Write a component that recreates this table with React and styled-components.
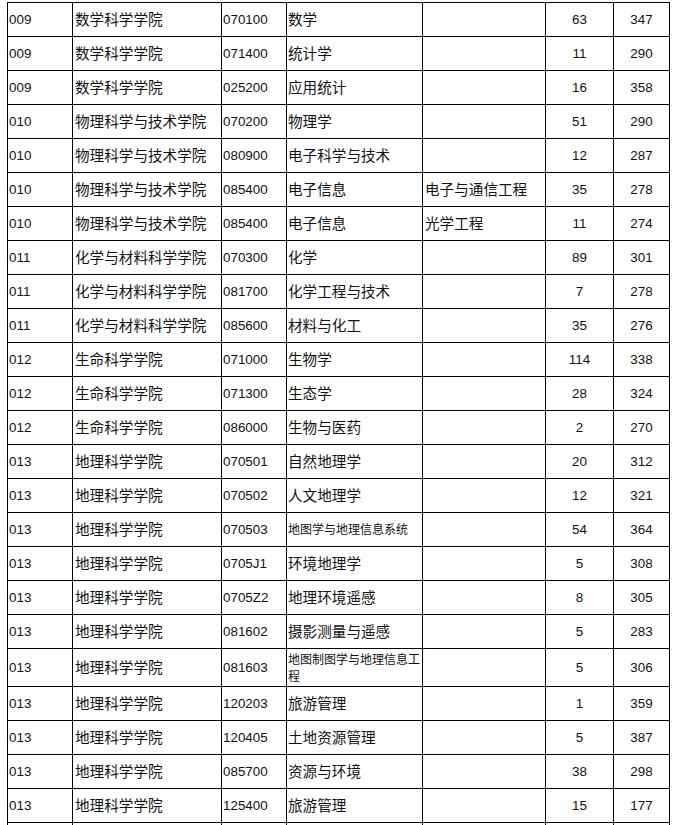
import React from "react";
import styled, { createGlobalStyle } from "styled-components";

const Global = createGlobalStyle`
  html, body { margin: 0; padding: 0; background: #fff; }
  body { overflow: hidden; }
`;

const Page = styled.div`
  width: 674px;
  height: 825px;
  overflow: hidden;
  padding: 2px 0 0 7px;
  box-sizing: border-box;
  font-family: "Liberation Sans", "Noto Sans CJK SC", sans-serif;
  color: #111;
`;

const Table = styled.div`
  width: 663px;
  display: flex;
  flex-direction: column;
  gap: 1px;
  padding-top: 1px;
  background: #000;
`;

const Row = styled.div`
  display: grid;
  grid-template-columns: 64px 148px 64px 135px 122px 67px 55px;
  column-gap: 1px;
  padding: 0 1px;
  background: #000;
  height: ${(p) => p.$h || 33}px;
`;

const Cell = styled.div`
  background: #fff;
  display: flex;
  align-items: center;
  justify-content: ${(p) => (p.$center ? "center" : "flex-start")};
  padding-left: ${(p) => (p.$center ? 0 : p.$pad ?? 2)}px;
  padding-bottom: ${(p) => (p.$num ? 0 : 2)}px;
  box-sizing: border-box;
  font-size: ${(p) => (p.$num ? "13.4px" : p.$small ? "12px" : "14.6px")};
  line-height: ${(p) => (p.$small ? "17px" : "18px")};
  font-family: ${(p) =>
    p.$num
      ? `"Liberation Sans", sans-serif`
      : `"Noto Sans CJK SC", sans-serif`};
  white-space: ${(p) => (p.$small ? "normal" : "nowrap")};
  word-break: break-all;
  overflow: hidden;
`;

const rows = [
  ["009", "数学科学学院", "070100", "数学", "", "63", "347"],
  ["009", "数学科学学院", "071400", "统计学", "", "11", "290"],
  ["009", "数学科学学院", "025200", "应用统计", "", "16", "358"],
  ["010", "物理科学与技术学院", "070200", "物理学", "", "51", "290"],
  ["010", "物理科学与技术学院", "080900", "电子科学与技术", "", "12", "287"],
  ["010", "物理科学与技术学院", "085400", "电子信息", "电子与通信工程", "35", "278"],
  ["010", "物理科学与技术学院", "085400", "电子信息", "光学工程", "11", "274"],
  ["011", "化学与材料科学学院", "070300", "化学", "", "89", "301"],
  ["011", "化学与材料科学学院", "081700", "化学工程与技术", "", "7", "278"],
  ["011", "化学与材料科学学院", "085600", "材料与化工", "", "35", "276"],
  ["012", "生命科学学院", "071000", "生物学", "", "114", "338"],
  ["012", "生命科学学院", "071300", "生态学", "", "28", "324"],
  ["012", "生命科学学院", "086000", "生物与医药", "", "2", "270"],
  ["013", "地理科学学院", "070501", "自然地理学", "", "20", "312"],
  ["013", "地理科学学院", "070502", "人文地理学", "", "12", "321"],
  ["013", "地理科学学院", "070503", "地图学与地理信息系统", "", "54", "364", "small"],
  ["013", "地理科学学院", "0705J1", "环境地理学", "", "5", "308"],
  ["013", "地理科学学院", "0705Z2", "地理环境遥感", "", "8", "305"],
  ["013", "地理科学学院", "081602", "摄影测量与遥感", "", "5", "283"],
  ["013", "地理科学学院", "081603", "地图制图学与地理信息工程", "", "5", "306", "tall"],
  ["013", "地理科学学院", "120203", "旅游管理", "", "1", "359"],
  ["013", "地理科学学院", "120405", "土地资源管理", "", "5", "387"],
  ["013", "地理科学学院", "085700", "资源与环境", "", "38", "298"],
  ["013", "地理科学学院", "125400", "旅游管理", "", "15", "177"],
  ["", "", "", "", "", "", ""],
];

export default function App() {
  return (
    <>
      <Global />
      <Page>
        <Table>
          {rows.map((r, i) => {
            const small = r[7] === "small" || r[7] === "tall";
            return (
              <Row key={i} $h={r[7] === "tall" ? 37 : 33}>
                <Cell $num $pad={1}>{r[0]}</Cell>
                <Cell>{r[1]}</Cell>
                <Cell $num $pad={1}>{r[2]}</Cell>
                <Cell $small={small} $pad={1}>{r[3]}</Cell>
                <Cell $pad={2}>{r[4]}</Cell>
                <Cell $num $center>{r[5]}</Cell>
                <Cell $num $center>{r[6]}</Cell>
              </Row>
            );
          })}
        </Table>
      </Page>
    </>
  );
}
